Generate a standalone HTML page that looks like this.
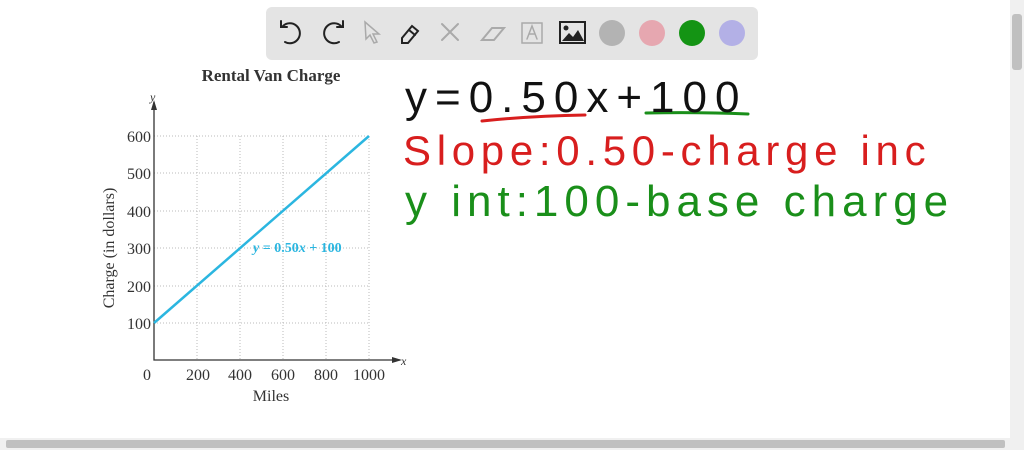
<!DOCTYPE html>
<html><head><style>
body{margin:0;width:1024px;height:450px;background:#fff;position:relative;overflow:hidden;font-family:"Liberation Sans",sans-serif}
.tb{position:absolute;left:266px;top:7px;width:492px;height:53px;background:#e4e4e4;border-radius:6px}
.hw{position:absolute;font-family:"Liberation Sans",sans-serif;font-weight:normal;white-space:nowrap;line-height:1}
</style></head><body>
<div class="tb"></div>
<svg style="position:absolute;left:0;top:0" width="1024" height="450">
 <g fill="none" stroke="#222" stroke-width="2" stroke-linecap="round">
  <path d="M283 26 A10 10 0 1 1 285 42"/><path d="M281 21 v6 h6"/>
  <path d="M341 26 A10 10 0 1 0 339 42"/><path d="M343 21 v6 h-6"/>
  <path d="M365 22 l14 12 h-6 l4 8 -3 1 -4 -8 -4 4z" stroke="#aaa" stroke-width="1.5"/>
  <path d="M402 38 l10 -12 6 5 -10 12 h-6z M409 30 l6 5"/>
  <path d="M442 24 l16 16 M458 24 l-16 16" stroke="#aaa"/>
  <path d="M482 40 l10 -12 h12 l-10 12z" stroke="#aaa"/>
  <rect x="522" y="23" width="20" height="20" stroke="#aaa" stroke-width="1.5"/>
  <path d="M527 39 l5 -13 5 13 M529 34 h6" stroke="#aaa" stroke-width="1.5"/>
  <rect x="560" y="22" width="25" height="21" stroke="#222" stroke-width="2"/>
 </g>
 <path d="M562 41 l7 -8 4 4 5 -7 6 11z" fill="#222"/><circle cx="566" cy="28" r="2.5" fill="#222"/>
 <circle cx="612" cy="33" r="13" fill="#b3b3b3"/>
 <circle cx="652" cy="33" r="13" fill="#e6a7b0"/>
 <circle cx="692" cy="33" r="13" fill="#149414"/>
 <circle cx="732" cy="33" r="13" fill="#b3b0e6"/>
 <g stroke="#bbb" stroke-width="1" stroke-dasharray="1,2">
  <path d="M197 136V360M240 136V360M283 136V360M326 136V360M369 136V360"/>
  <path d="M154 136H369M154 173H369M154 211H369M154 248H369M154 286H369M154 323H369"/>
 </g>
 <g stroke="#333" stroke-width="1.3" fill="none">
  <path d="M154 102V360H400"/>
 </g>
 <path d="M151 110 L154 100 L157 110z M392 357 L402 360 L392 363z" fill="#333"/>
 <path d="M154 323 L369 136" stroke="#2bb6e0" stroke-width="2.5"/>
 <g font-family="Liberation Serif,serif" fill="#333" font-size="16">
  <text x="271" y="81" text-anchor="middle" font-weight="bold" font-size="17">Rental Van Charge</text>
  <text x="150" y="101" font-style="italic" font-size="12">y</text>
  <text x="401" y="365" font-style="italic" font-size="12">x</text>
  <g text-anchor="end"><text x="151" y="142">600</text><text x="151" y="179">500</text><text x="151" y="217">400</text><text x="151" y="254">300</text><text x="151" y="292">200</text><text x="151" y="329">100</text></g>
  <g text-anchor="middle"><text x="147" y="380">0</text><text x="198" y="380">200</text><text x="240" y="380">400</text><text x="283" y="380">600</text><text x="326" y="380">800</text><text x="369" y="380">1000</text>
  <text x="271" y="401">Miles</text></g>
  <text transform="translate(114,248) rotate(-90)" text-anchor="middle">Charge (in dollars)</text>
  <text x="253" y="252" fill="#2bb6e0" font-weight="bold" font-size="14"><tspan font-style="italic">y</tspan> = 0.50<tspan font-style="italic">x</tspan> + 100</text>
 </g>
 <path d="M482 121 Q530 116 585 115" stroke="#d81e1e" stroke-width="3" fill="none" stroke-linecap="round"/>
 <path d="M646 113 Q700 112 748 114" stroke="#1a8f1a" stroke-width="3" fill="none" stroke-linecap="round"/>
 <rect x="1010" y="0" width="14" height="450" fill="#f0f0f0"/>
 <rect x="1012" y="14" width="10" height="56" rx="3" fill="#c0c0c0"/>
 <rect x="0" y="438" width="1010" height="12" fill="#f0f0f0"/>
 <rect x="6" y="440" width="999" height="8" rx="2" fill="#c0c0c0"/>
</svg>
<div class="hw" style="left:405px;top:76px;font-size:44px;color:#111;letter-spacing:8px">y=0.50x+100</div>
<div class="hw" style="left:403px;top:130px;font-size:42px;color:#d81e1e;letter-spacing:5.7px">Slope:0.50-charge inc</div>
<div class="hw" style="left:405px;top:180px;font-size:44px;color:#1a8f1a;letter-spacing:6px">y int:100-base charge</div>
</body></html>
